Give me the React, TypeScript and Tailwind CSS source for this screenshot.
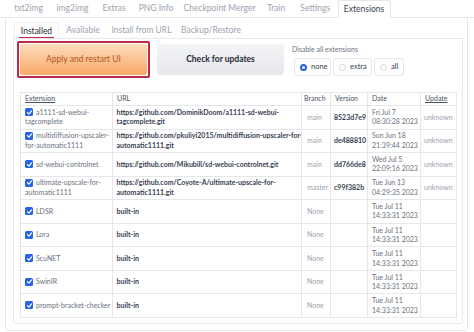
const topTabs = [
  { label: "txt2img", w: "w-[42px]" },
  { label: "img2img", w: "w-[46px]" },
  { label: "Extras", w: "w-[37px]" },
  { label: "PNG Info", w: "w-[47px]" },
  { label: "Checkpoint Merger", w: "w-[80px]" },
  { label: "Train", w: "w-[33.5px]" },
  { label: "Settings", w: "w-[44.5px]" },
];

const subTabs = [
  { label: "Available", w: "w-[48px]" },
  { label: "Install from URL", w: "w-[69px]" },
  { label: "Backup/Restore", w: "w-[70px]" },
];

type Row = {
  name: string[];
  url: string[];
  branch: string;
  version: string;
  date: string[];
  update: string;
};

const rows: Row[] = [
  {
    name: ["a1111-sd-webui-", "tagcomplete"],
    url: ["https://github.com/DominikDoom/a1111-sd-webui-", "tagcomplete.git"],
    branch: "main",
    version: "8523d7e9",
    date: ["Fri Jul 7", "08:30:28 2023"],
    update: "unknown",
  },
  {
    name: ["multidiffusion-upscaler-", "for-automatic1111"],
    url: ["https://github.com/pkuliyi2015/multidiffusion-upscaler-for-", "automatic1111.git"],
    branch: "main",
    version: "de488810",
    date: ["Sun Jun 18", "21:39:44 2023"],
    update: "unknown",
  },
  {
    name: ["sd-webui-controlnet"],
    url: ["https://github.com/Mikubill/sd-webui-controlnet.git"],
    branch: "main",
    version: "dd766de8",
    date: ["Wed Jul 5", "22:09:16 2023"],
    update: "unknown",
  },
  {
    name: ["ultimate-upscale-for-", "automatic1111"],
    url: ["https://github.com/Coyote-A/ultimate-upscale-for-", "automatic1111.git"],
    branch: "master",
    version: "c99f382b",
    date: ["Tue Jun 13", "04:29:35 2023"],
    update: "unknown",
  },
  ...["LDSR", "Lora", "ScuNET", "SwinIR", "prompt-bracket-checker"].map((n) => ({
    name: [n],
    url: ["built-in"],
    branch: "None",
    version: "",
    date: ["Tue Jul 11", "14:33:31 2023"],
    update: "",
  })),
];

function Check() {
  return (
    <span className="inline-flex w-[8px] h-[8px] rounded-[1.5px] bg-[#2563eb] items-center justify-center align-[-1px] mr-[3px]">
      <svg viewBox="0 0 10 10" className="w-[7px] h-[7px]">
        <path d="M2 5.2 L4.2 7.3 L8 2.8" fill="none" stroke="white" strokeWidth="1.8" strokeLinecap="round" strokeLinejoin="round" />
      </svg>
    </span>
  );
}

function Radio({ label, on, w }: { label: string; on?: boolean; w: string }) {
  return (
    <div className={`${w} h-[18px] flex items-center gap-[4px] pl-[5px] border border-[#e5e7eb] rounded-[3px] bg-white`}>
      {on ? (
        <span className="w-[7px] h-[7px] rounded-full border-[2px] border-[#2563eb] bg-white" />
      ) : (
        <span className="w-[7px] h-[7px] rounded-full border border-[#d1d5db] bg-white" />
      )}
      <span className="text-[7.5px] text-[#374151]">{label}</span>
    </div>
  );
}

const td = "border border-[#e5e7eb] px-[4px] align-middle whitespace-nowrap overflow-hidden";

export default function App() {
  return (
    <div className="w-[474px] h-[332px] bg-white overflow-hidden font-['Lato','Noto_Sans',sans-serif]">
      <div className="flex h-[18px] border-b border-[#e5e7eb] pl-[7.5px]">
        {topTabs.map((t) => (
          <div key={t.label} className={`${t.w} flex items-center justify-center text-[8.5px] text-[#9ca3af]`}>
            {t.label}
          </div>
        ))}
        <div className="w-[53px] h-[18px] flex items-center justify-center text-[8.5px] text-[#374151] bg-white border border-b-0 border-[#e5e7eb] rounded-t-[3px]">
          Extensions
        </div>
      </div>

      <div className="ml-[5px] w-[463px] h-[313px] border-x border-b border-[#e5e7eb] rounded-b-[4px] pl-[7px] pr-[4px] pt-[4px]">
        <div className="flex h-[17px] border-b border-[#e5e7eb] pl-[1px]">
          <div className="w-[45px] h-[17px] relative flex items-center justify-center text-[8.5px] text-[#1f2937] border border-b-0 border-[#eef0f3] rounded-t-[3px]">
            Installed
            <span className="absolute left-[4px] right-[4px] bottom-[1px] h-[1.5px] bg-[#c02947]" />
          </div>
          {subTabs.map((t) => (
            <div key={t.label} className={`${t.w} flex items-center justify-center text-[8.5px] text-[#9ca3af]`}>
              {t.label}
            </div>
          ))}
        </div>

        <div className="h-[285px] border-x border-b border-[#e5e7eb] rounded-b-[4px] pl-[3px]">
          <div className="flex items-start pt-[2px] h-[53px]">
            <div className="w-[133px] h-[37px] border-[2px] border-[#c02947] rounded-[2px] p-[1px]">
              <div className="w-full h-full rounded-[3px] bg-gradient-to-b from-[#fddcbc] to-[#f8a866] flex items-center justify-center text-[8.5px] text-[#b4531c]">
                Apply and restart UI
              </div>
            </div>
            <div className="ml-[7px] mt-[3px] w-[127px] h-[31px] rounded-[4px] bg-gradient-to-b from-[#f3f4f6] to-[#e5e7eb] flex items-center justify-center text-[8.5px] font-bold text-[#1f2937]">
              Check for updates
            </div>
            <div className="ml-[8px] mt-[3px] flex flex-col">
              <div className="text-[7px] text-[#6b7280] h-[11px] flex items-center">Disable all extensions</div>
              <div className="flex gap-[2px] mt-[3px] ml-[2px]">
                <Radio label="none" on w="w-[37px]" />
                <Radio label="extra" w="w-[39px]" />
                <Radio label="all" w="w-[30px]" />
              </div>
            </div>
          </div>

          <table className="ml-[3px] w-[436px] border-collapse table-fixed text-[7px] leading-[9.5px]">
            <colgroup>
              <col className="w-[92px]" />
              <col className="w-[189px]" />
              <col className="w-[29px]" />
              <col className="w-[37px]" />
              <col className="w-[53px]" />
              <col className="w-[36px]" />
            </colgroup>
            <thead>
              <tr className="h-[13px] text-[#4b5563]">
                <th className={`${td} text-left font-normal underline`}>Extension</th>
                <th className={`${td} text-left font-normal`}>URL</th>
                <th className={`${td} text-left font-normal !px-[2px]`}>Branch</th>
                <th className={`${td} text-left font-normal`}>Version</th>
                <th className={`${td} text-left font-normal`}>Date</th>
                <th className={`${td} text-left font-normal underline`}>Update</th>
              </tr>
            </thead>
            <tbody>
              {rows.map((r) => (
                <tr key={r.name.join("")} className="h-[23.55px]">
                  <td className={`${td} text-[#6b7280] !pl-[4px] !pr-0`}>
                    <Check />
                    {r.name[0]}
                    {r.name[1] && (
                      <>
                        <br />
                        {r.name[1]}
                      </>
                    )}
                  </td>
                  <td className={`${td} font-bold text-[#374151] !pr-0 !pl-[3.5px]`}>
                    {r.url[0]}
                    {r.url[1] && (
                      <>
                        <br />
                        {r.url[1]}
                      </>
                    )}
                  </td>
                  <td className={`${td} text-[#9ca3af] !px-[5px]`}>{r.branch}</td>
                  <td className={`${td} font-bold text-[#374151] !px-[3px]`}>{r.version}</td>
                  <td className={`${td} text-[#6b7280]`}>
                    {r.date[0]}
                    <br />
                    {r.date[1]}
                  </td>
                  <td className={`${td} text-[#9ca3af] !px-[3px]`}>{r.update}</td>
                </tr>
              ))}
            </tbody>
          </table>
        </div>
      </div>
    </div>
  );
}
